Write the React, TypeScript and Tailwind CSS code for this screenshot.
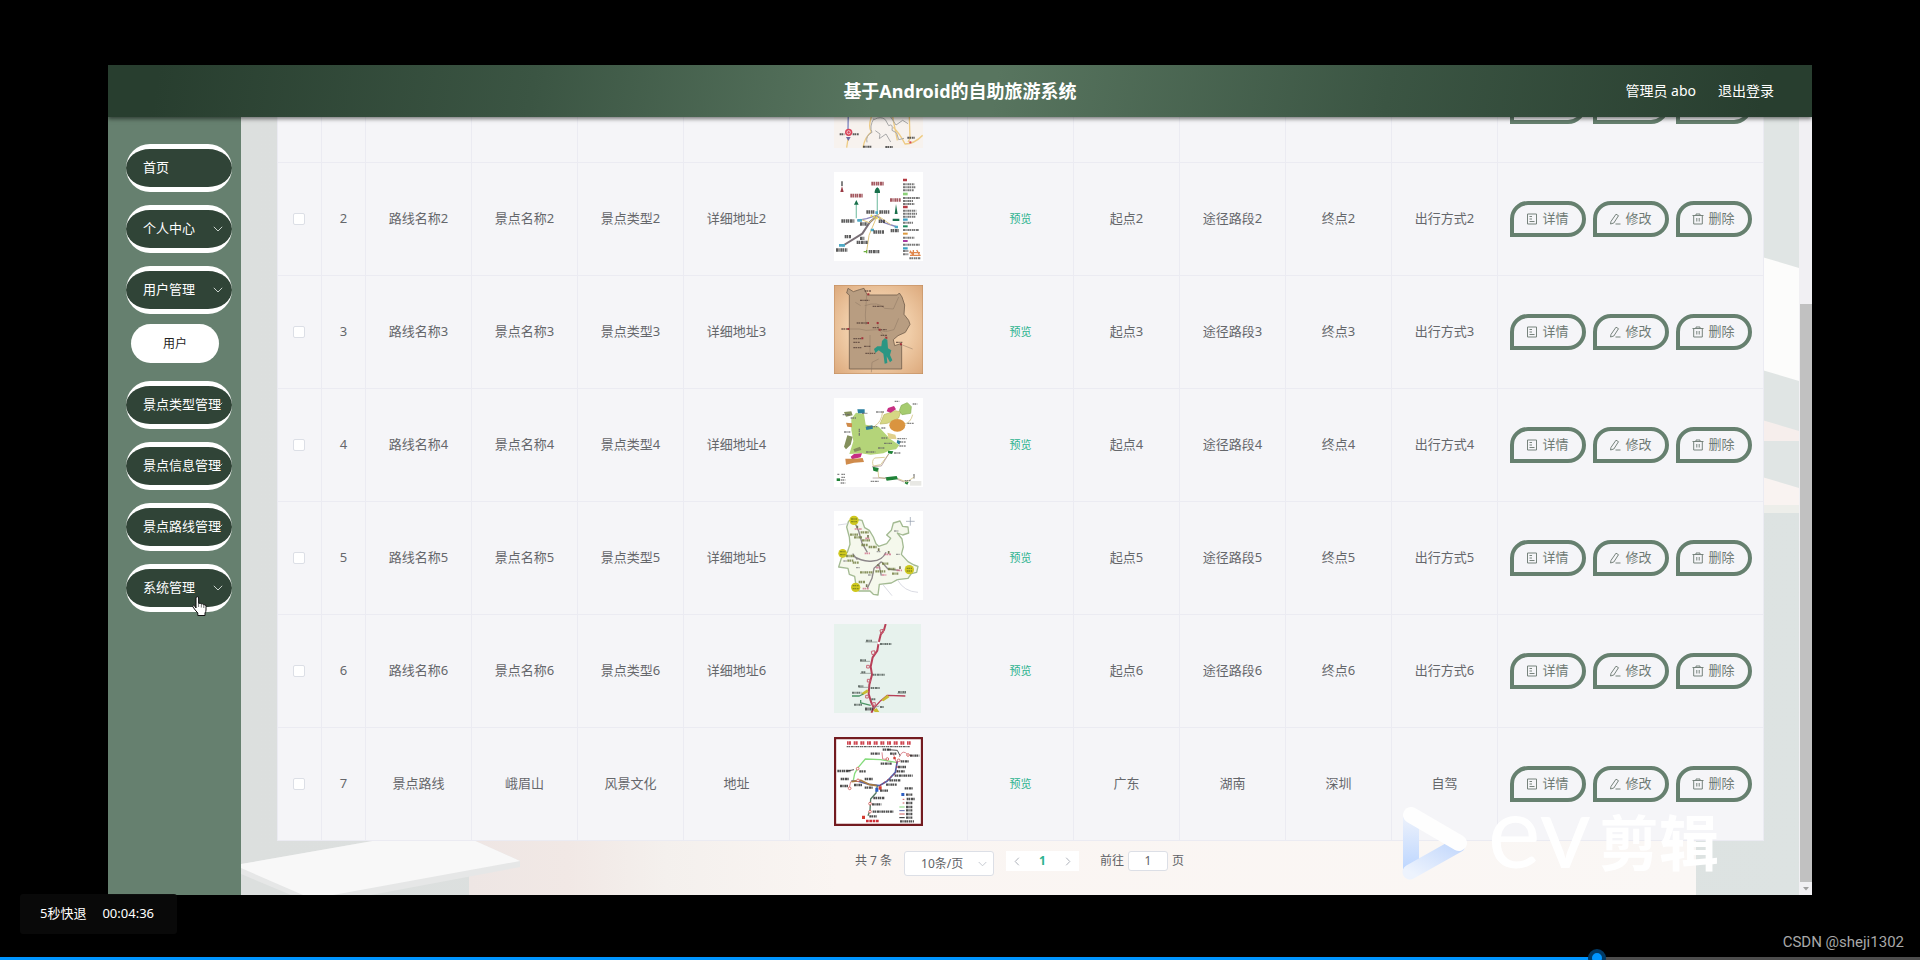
import type { ReactNode } from "react"
import clsx from "clsx"

type MenuItem = {
  label: string
  children?: string[]
  arrow?: boolean
  hovered?: boolean
}

const menus: MenuItem[] = [
  { label: "首页" },
  { label: "个人中心", arrow: true },
  { label: "用户管理", arrow: true, children: ["用户"] },
  { label: "景点类型管理", arrow: true },
  { label: "景点信息管理", arrow: true },
  { label: "景点路线管理", arrow: true },
  { label: "系统管理", arrow: true, hovered: true },
]

const routes = [
  {
    // mostly scrolled under the header
    id: 1,
    scrolled: true,
    before: ["路线名称1", "景点名称1", "景点类型1", "详细地址1"],
    after: ["起点1", "途径路段1", "终点1", "出行方式1"],
    map: <MapOne />,
  },
  {
    id: 2,
    before: ["路线名称2", "景点名称2", "景点类型2", "详细地址2"],
    after: ["起点2", "途径路段2", "终点2", "出行方式2"],
    map: <MapTwo />,
  },
  {
    id: 3,
    before: ["路线名称3", "景点名称3", "景点类型3", "详细地址3"],
    after: ["起点3", "途径路段3", "终点3", "出行方式3"],
    map: <MapThree />,
  },
  {
    id: 4,
    before: ["路线名称4", "景点名称4", "景点类型4", "详细地址4"],
    after: ["起点4", "途径路段4", "终点4", "出行方式4"],
    map: <MapFour />,
  },
  {
    id: 5,
    before: ["路线名称5", "景点名称5", "景点类型5", "详细地址5"],
    after: ["起点5", "途径路段5", "终点5", "出行方式5"],
    map: <MapFive />,
  },
  {
    id: 6,
    before: ["路线名称6", "景点名称6", "景点类型6", "详细地址6"],
    after: ["起点6", "途径路段6", "终点6", "出行方式6"],
    map: <MapSix />,
  },
  {
    id: 7,
    before: ["景点路线", "峨眉山", "风景文化", "地址"],
    after: ["广东", "湖南", "深圳", "自驾"],
    map: <MapSeven />,
  },
]

export default function App() {
  return (
    <div className="relative flex h-screen flex-col overflow-hidden bg-black px-27 py-[65px] font-['Noto_Sans','Noto_Sans_CJK_SC',sans-serif]">
      <div className="flex min-h-0 flex-1 flex-col">
        <Header />
        <div className="flex min-h-0 flex-1">
          <Sidebar />
          <main className="relative flex min-w-0 flex-1 overflow-hidden bg-[#dde1e0]">
            <Backdrop />
            <div className="relative flex min-w-0 flex-1 flex-col justify-end pr-[37px] pl-9">
              <RouteTable />
              <Pagination />
            </div>
            <Scrollbar />
            <Watermark />
          </main>
        </div>
      </div>
      <Player />
    </div>
  )
}

function Header() {
  return (
    <header className="relative z-10 grid h-[52px] shrink-0 grid-cols-[1fr_auto_1fr] items-center bg-linear-[100deg,#283e2f_3%,#3b5543_25%,#58755f_45%,#58755f_52%,#3b5543_75%,#283e2f_97%] text-white shadow-[0_2px_4px_rgba(0,0,0,0.5)]">
      <span />
      <h1 className="text-[18px] font-bold">基于Android的自助旅游系统</h1>
      <div className="flex justify-end gap-[22px] pr-[38px] text-sm">
        <span>管理员 abo</span>
        <a href="#logout">退出登录</a>
      </div>
    </header>
  )
}

function Sidebar() {
  return (
    <nav className="w-[133px] shrink-0 bg-[#66806f] pt-[27px] pl-[18px]">
      <ul className="flex flex-col gap-[13px] text-[13px]">
        {menus.map((item) => (
          <li key={item.label} className={clsx(item.children && "mb-[5px]")}>
            <button
              type="button"
              className="relative flex h-12 w-[106px] items-center rounded-[24px] border-y-[5px] border-white bg-[#304437] pl-[17px] whitespace-nowrap text-white"
            >
              {item.label}
              {item.arrow && (
                <svg
                  viewBox="0 0 10 6"
                  className="absolute top-4 right-[9px] h-[6px] w-[10px]"
                  fill="none"
                  stroke="#c9d2cc"
                >
                  <path d="M.8 .8 5 5 9.2 .8" />
                </svg>
              )}
              {item.hovered && <HandCursor />}
            </button>
            {item.children?.map((child) => (
              <a
                key={child}
                href="#user"
                className="mt-[10px] ml-[5px] flex h-[39px] w-[88px] items-center justify-center rounded-[20px] bg-white text-[12px] text-[#222]"
              >
                {child}
              </a>
            ))}
          </li>
        ))}
      </ul>
    </nav>
  )
}

function HandCursor() {
  return (
    <svg
      viewBox="0 0 15 20"
      className="absolute top-[27px] left-[66px] h-5 w-[15px]"
      fill="#fff"
      stroke="#111"
      strokeLinejoin="round"
    >
      <path d="M4 12V2q0-1.300 1.300-1.300T6.600 2v5.500q2-1 2.600.6 2-.8 2.500.6 2.300-.6 2.300 1.600v3.700q0 1.500-1 3v2.500H5.800V17Q3 14 1 11q-.8-1.500.4-1.700T4 12Z" />
      <path d="M6.600 8v3M9.300 8.500v3M11.800 9v3" strokeWidth=".6" />
    </svg>
  )
}

/* desk photo behind the table, only its edges stay visible */
function Backdrop() {
  return (
    <svg
      viewBox="0 0 1571 778"
      preserveAspectRatio="none"
      className="absolute inset-0 size-full"
    >
      <defs>
        <linearGradient id="warm">
          <stop offset="0" stopColor="#eee6e4" />
          <stop offset=".08" stopColor="#f1e8e5" />
          <stop offset=".16" stopColor="#f4f0ed" />
          <stop offset=".3" stopColor="#faf5f2" />
          <stop offset="1" stopColor="#faf7f5" />
        </linearGradient>
        <linearGradient id="wall">
          <stop offset="0" stopColor="#dcdfde" />
          <stop offset="1" stopColor="#dde3e2" />
        </linearGradient>
      </defs>
      <rect width="1571" height="778" fill="url(#wall)" />
      <rect x="1500" width="71" height="396" fill="#e0e5e4" />
      <path d="M228 722H1455V778H228Z" fill="url(#warm)" />
      <path d="M0 747 143 722H230L279 744V750L130 778H50L0 757Z" fill="#e6e7e7" />
      <path d="M0 747 143 722H230L279 744 92 778H62L0 751Z" fill="#f8f8f8" />
      <path d="M1521 140 1558 151V264L1521 253Z" fill="#fcfcfb" />
      <path d="M1521 303 1558 314V324H1521Z" fill="#f6eeec" />
      <path d="M1521 360 1558 371V388H1521Z" fill="#f9f3f1" />
      <path d="M1521 388H1558V396H1521Z" fill="#edeeea" />
    </svg>
  )
}

function RouteTable() {
  return (
    <table className="w-full table-fixed border-collapse bg-[#f5f5f8] text-center text-[13px] text-[#65676b]">
      <colgroup>
        <col className="w-[44px]" />
        <col className="w-[44px]" />
        <col className="w-[106px]" />
        <col className="w-[106px]" />
        <col className="w-[106px]" />
        <col className="w-[106px]" />
        <col className="w-[178px]" />
        <col className="w-[106px]" />
        <col className="w-[106px]" />
        <col className="w-[106px]" />
        <col className="w-[106px]" />
        <col className="w-[106px]" />
        <col className="w-[266px]" />
      </colgroup>
      <tbody>
        {routes.map((route) => (
          <tr key={route.id} className="h-[113px]">
            <Cell>
              <input
                type="checkbox"
                aria-label={`选择第${route.id}行`}
                className="ml-[15px] block size-3 appearance-none rounded-[2px] border border-[#dcdfe6] bg-white"
              />
            </Cell>
            <Cell hidden={route.scrolled}>{route.id}</Cell>
            {route.before.map((text) => (
              <Cell key={text} hidden={route.scrolled}>
                {text}
              </Cell>
            ))}
            <Cell>{route.map}</Cell>
            <Cell hidden={route.scrolled}>
              <a href="#preview" className="text-[11px] text-[#2cb38f]">
                预览
              </a>
            </Cell>
            {route.after.map((text) => (
              <Cell key={text} hidden={route.scrolled}>
                {text}
              </Cell>
            ))}
            <Cell>
              <div className="flex justify-center gap-[7px]">
                <ActionButton label="详情" hidden={route.scrolled}>
                  <path d="M1.500 1h9v10h-9ZM3.500 3.500H6M3.500 6H6M3.500 8.500h5" />
                </ActionButton>
                <ActionButton label="修改" hidden={route.scrolled}>
                  <path d="M7 1.200 9.500 2.700 4.800 10 1.500 11 2 8.400ZM6.500 11h5" />
                </ActionButton>
                <ActionButton label="删除" hidden={route.scrolled}>
                  <path d="M.5 2.500h11M4 2.500V1h4v1.500M1.700 2.500V11h8.600V2.500M4.800 5v3.500M7.200 5v3.500" />
                </ActionButton>
              </div>
            </Cell>
          </tr>
        ))}
      </tbody>
    </table>
  )
}

function Cell({ children, hidden }: { children: ReactNode; hidden?: boolean }) {
  return (
    <td className="border border-[#ebebf2] p-0">
      {hidden ? <span className="invisible">{children}</span> : children}
    </td>
  )
}

function ActionButton({
  label,
  hidden,
  children,
}: {
  label: string
  hidden?: boolean
  children: ReactNode
}) {
  return (
    <button
      type="button"
      className="flex h-9 w-[76px] items-center justify-center gap-1 rounded-[18px] rounded-bl-none border-4 border-[#66806f] text-[13px] text-[#6e7a74]"
    >
      <svg viewBox="0 0 12 12" className="size-3" fill="none" stroke="#77837c">
        {children}
      </svg>
      <span className={clsx(hidden && "invisible")}>{label}</span>
    </button>
  )
}

function Pagination() {
  return (
    <div className="flex h-[54px] shrink-0 items-start justify-center pt-[10px] text-[12px] text-[#606266]">
      <span className="mr-3 leading-5">共 7 条</span>
      <div className="relative mr-3">
        <select
          aria-label="每页条数"
          className="h-[25px] w-[90px] appearance-none rounded-[3px] border border-[#dcdfe6] bg-white pl-4 text-[12px]"
        >
          <option>10条/页</option>
        </select>
        <svg
          viewBox="0 0 10 6"
          className="pointer-events-none absolute top-[10px] right-[7px] h-[6px] w-[9px]"
          fill="none"
          stroke="#c0c4cc"
        >
          <path d="M.8 .8 5 5 9.2 .8" />
        </svg>
      </div>
      <div className="mr-[21px] flex h-5 w-[73px] items-center justify-between bg-white px-2">
        <button type="button" aria-label="上一页">
          <svg viewBox="0 0 6 10" className="h-[9px] w-[6px]" fill="none" stroke="#a5a9b2">
            <path d="M5 .8 1 5l4 4.200" />
          </svg>
        </button>
        <button type="button" className="font-bold text-[#2cb38f]">
          1
        </button>
        <button type="button" aria-label="下一页">
          <svg viewBox="0 0 6 10" className="h-[9px] w-[6px]" fill="none" stroke="#a5a9b2">
            <path d="m1 .8 4 4.200-4 4.200" />
          </svg>
        </button>
      </div>
      <label className="flex items-center gap-1 leading-5">
        前往
        <input
          defaultValue="1"
          className="h-5 w-10 rounded-[3px] border border-[#dcdfe6] bg-white text-center text-[12px]"
        />
        页
      </label>
    </div>
  )
}

function Scrollbar() {
  return (
    <div className="relative flex w-[13px] shrink-0 flex-col bg-[#f1f0f3] pl-px">
      <div className="h-[24%]" />
      <div className="flex-1 bg-[#c1c1c1]" />
      <div className="flex h-[13px] items-center justify-center">
        <svg viewBox="0 0 6 4" className="h-1 w-[6px]" fill="#a0a0a0">
          <path d="M0 0h6L3 3.500Z" />
        </svg>
      </div>
    </div>
  )
}

function Watermark() {
  return (
    <div className="pointer-events-none absolute right-[93px] bottom-[15px] flex h-[74px] items-center text-white">
      <svg viewBox="0 0 66 74" className="mr-5 h-[74px] w-[66px]">
        <defs>
          <linearGradient id="evLeft" x2="0" y2="1">
            <stop offset="0" stopColor="#eef2fb" />
            <stop offset="1" stopColor="#bcd6ff" />
          </linearGradient>
          <linearGradient id="evBottom" x1="1" y1="0" x2="0" y2="1">
            <stop offset="0" stopColor="#c3d8fc" />
            <stop offset="1" stopColor="#edf3fd" />
          </linearGradient>
        </defs>
        <path d="M1 9H17V64H1Z" fill="url(#evLeft)" />
        <path d="M8 66 56 39" stroke="url(#evBottom)" strokeWidth="15" strokeLinecap="round" />
        <path d="M9 9 57 37" stroke="#fefefe" strokeWidth="16" strokeLinecap="round" />
      </svg>
      <span className="flex h-[74px] items-center font-['Lato',sans-serif] text-[100px] leading-[74px]">
        <span className="-mt-7">ev</span>
      </span>
      <span className="ml-2 text-[60px] leading-[74px] font-bold">剪辑</span>
    </div>
  )
}

function Player() {
  return (
    <>
      <div className="absolute bottom-[26px] left-5 flex h-10 w-[157px] items-center gap-4 rounded-[3px] bg-[#0a0a0a]/95 pl-5 text-[13px] text-white">
        <span>5秒快退</span>
        <span>00:04:36</span>
      </div>
      <span className="absolute right-4 bottom-2 font-['Roboto','Liberation_Sans',sans-serif] text-[15px] leading-5 text-[#a8a8a8]">
        CSDN @sheji1302
      </span>
      <div className="absolute inset-x-0 bottom-0 h-[3px] bg-[#4d4d4d]">
        <div className="relative h-full w-[83.2%] bg-[#0095ff]">
          <span className="absolute -top-2 -right-[9px] size-[18px] rounded-full border-4 border-[#003a66] bg-[#0095ff]" />
        </div>
      </div>
    </>
  )
}

function Thumb({ children }: { children: ReactNode }) {
  return (
    <svg
      viewBox="0 0 267 267"
      className="mx-auto mb-[6px] size-[89px]"
      fill="none"
      strokeLinejoin="round"
    >
      {children}
    </svg>
  )
}

/* rows of place names, too small to read */
function Marks({ d, color = "#333", size = 6 }: { d: string; color?: string; size?: number }) {
  return <path d={d} stroke={color} strokeWidth={size} strokeDasharray="6 1 4 2" opacity=".8" />
}

function MapOne() {
  return (
    <Thumb>
      <path d="M0 0H267V267H0Z" fill="#f7f2ee" />
      <path d="M44 100 42 212" stroke="#7f86c0" strokeWidth="4" />
      <path d="M42 240 38 266M112 174q-10 30 0 45-20 15-25 47M176 174l8 40 6 30M226 174l2 65-6 10M178 205q20 20 35 50 28 0 53-26" stroke="#eecb83" strokeWidth="4" />
      <path d="M120 178q-15 25-6 42-20 10-15 30M120 182q20-12 34 0l10 18q14-8 10 14l14 8 6 20 16-4M124 215l14 10-2 14 20-14 14 24M170 174l16 24 20-14 16 10" stroke="#a9a9a9" strokeWidth="3" />
      <circle cx="44" cy="220" r="11" fill="#d94459" />
      <circle cx="44" cy="220" r="5" stroke="#fff" strokeWidth="2" />
      <path d="m36 234 7 12 7-12Z" fill="#6c6aa0" />
      <Marks d="M17 226h14M56 226h18M87 263h27M154 264h22M220 236h22" />
      <path d="M226 250h6" stroke="#d94459" strokeWidth="6" />
    </Thumb>
  )
}

function MapTwo() {
  return (
    <Thumb>
      <path d="M0 0H267V267H0Z" fill="#fff" />
      <path d="M24 28v14" stroke="#444" strokeWidth="4" />
      <path d="m24 42 5 18H19Z" fill="#993a44" />
      <path d="M130 60v70M67 97v42" stroke="#8fcab4" strokeWidth="4" />
      <path d="M130 46q9 6 8 17h-16q-1-11 8-17ZM67 84l7 14H60ZM186 96l5 30h-9ZM176 140h20v7h-20Z" fill="#19704b" />
      <path d="M25 222 85 185 108 150 128 133" stroke="#7a7077" strokeWidth="6" />
      <path d="M70 145 98 140 128 130 150 152 190 165" stroke="#8c89bd" strokeWidth="4" />
      <path d="M80 142 106 152 140 122M128 135 105 190 98 238M130 130 170 158" stroke="#e3c87d" strokeWidth="3" />
      <path d="M70 145h14M110 174h10M15 220h18M182 165h10M124 122h8" stroke="#4eaac6" strokeWidth="8" />
      <path d="M110 130 142 144" stroke="#e8d64f" strokeWidth="6" strokeDasharray="5 4" />
      <Marks d="M112 35h38M49 71h38M168 84h32" color="#8d3038" size={11} />
      <Marks d="M97 120h26M136 120h30M22 147h40M78 156h22M32 194h20M68 211h34M118 180h32M134 148h20M170 176h26M6 234h34M104 239h32M78 199h14" size={10} />
      <path d="M89 239h10M98 234v10" stroke="#6fae42" strokeWidth="4" />
      <Marks d="M207 37h34M207 46h38M207 55h32M207 78h50M207 87h30M207 96h34M207 116h40M207 125h42M207 134h38M207 152h30M207 174h48M207 197h34M207 218h50M207 237h16M207 247h16M226 259h34" color="#555" />
      <path d="M207 24h12M207 105h14" stroke="#b33b43" strokeWidth="7" />
      <path d="M207 66h14" stroke="#8bd078" strokeWidth="8" />
      <path d="M207 143h14M207 229h14" stroke="#3c9fc4" strokeWidth="7" />
      <path d="M207 163h14" stroke="#1c8a5b" strokeWidth="6" />
      <path d="M207 185h14" stroke="#dc9a3f" strokeWidth="6" />
      <path d="M207 207h14" stroke="#a839a0" strokeWidth="6" />
      <path d="m228 236 8 12M238 234v14M248 234l8 14M226 242h32M228 250h32" stroke="#e0884e" strokeWidth="4" />
    </Thumb>
  )
}

function MapThree() {
  return (
    <Thumb>
      <defs>
        <radialGradient id="parchment" r=".7">
          <stop offset=".5" stopColor="#f0cda8" />
          <stop offset="1" stopColor="#dca97c" />
        </radialGradient>
      </defs>
      <path d="M0 0H267V267H0Z" fill="url(#parchment)" stroke="#bd8a5e" strokeWidth="3" />
      <path
        d="M46 252V30L38 24 42 10 58 20 76 14 90 10 100 30H190L196 24 204 36 212 60 210 88 224 106 228 118 214 142 192 152 178 164 182 182 200 176 203 184V252Z"
        fill="#b89d81"
        stroke="#75604d"
        strokeWidth="2.500"
      />
      <path d="M46 132h30l20 4 34-2 24 6 26-6 14-34M98 30l-4 60 2 30M92 62q40-14 60 8l26 2 16-36M130 110l4 24 24 26M108 150v60M134 222l-20 10-2 30M80 62 64 52M200 178l36 14" stroke="#8c7763" strokeWidth="1.500" />
      <path d="M152 160 160 164 162 190 172 196 168 210 175 226 168 232 158 214 160 234 152 236 148 206 134 196 124 204 120 192 130 184 142 184 144 168Z" fill="#2b9683" />
      <Marks d="M78 46h28M116 64h34M68 114h34M116 128h18M58 161h26M58 172h20M58 188h24M90 184h20M94 205h30M134 134h26M22 132h22M140 151h20M92 18h20M186 172h20" color="#59443b" size={4} />
      <path d="M100 28h6M40 132h6M128 114h6M134 134h6M154 158h6M82 160h6M198 178h6M100 114h5" stroke="#a2333a" strokeWidth="6" />
    </Thumb>
  )
}

function MapFour() {
  return (
    <Thumb>
      <path d="M0 0H267V267H0Z" fill="#fff" />
      <path d="M52 62 66 44 90 48 95 80 134 86 158 112 168 122 196 142 186 154 170 156 148 166 110 170 80 166 46 168 58 130 52 96Z" fill="#b4d479" />
      <path d="M138 78 150 50 184 38 200 42 194 60 160 76Z" fill="#d6d784" stroke="#b9b55f" strokeWidth="2" />
      <path d="M196 38 202 22 220 14 232 26 230 46 204 50Z" fill="#a6cc6f" stroke="#87ad55" strokeWidth="2" />
      <ellipse cx="190" cy="82" rx="24" ry="19" fill="#da943f" />
      <path d="M158 40 162 30 180 24 186 34 170 44ZM50 176 60 168 84 166 80 178 54 184Z" fill="#c72e83" />
      <path d="M70 34h22v12H72ZM95 86l20-4 2 10-20 4ZM190 126l10 4-4 10-8-6Z" fill="#2a7f9e" />
      <path d="M30 42 52 40 56 52 36 56ZM30 146 40 112 56 116 50 140 36 154ZM58 154l20-8 4 10-20 6Z" fill="#84905c" />
      <path d="M36 74 54 76 54 88 40 86ZM34 182 60 182 86 180 90 192 60 194 36 200Z" fill="#cf8b4b" />
      <path d="M160 104 184 110 188 124 164 122Z" fill="#e1d08c" />
      <path d="M116 206l18 4-2 12-14-4ZM154 238l34-4 4 10-34 4ZM162 158l16 2-4 8-12-2ZM214 250l10 2-4 8-8-4Z" fill="#1f8237" />
      <path d="M122 84q20-10 24-44M236 50q-6 24-24 28M164 168 140 200 118 204q-6-16 4-24l30-2M132 218l2 20 20 4M192 242l26 10 24-16" stroke="#dccf9b" strokeWidth="3" />
      <path d="M114 206 142 204 164 168M116 240h42M190 244l20 8" stroke="#a18582" strokeWidth="2" />
      <Marks d="M182 10h14M236 18h14M126 42h26M100 86h30M142 90h14M30 102h20M142 120h18M190 122h28M196 132h20M196 144h20M150 136h26M132 150h20M96 162h28M180 165h20M110 250h24M220 76h20M50 60h16M26 50h22M76 92v22M84 46h16M10 229h6M22 229h12M22 238h12M20 246h14M20 255h14M212 248h18M240 228v14" color="#666" size={4} />
      <path d="M8 241h10v8H8Z" fill="#1f8237" />
      <path d="M228 256h34" stroke="#e8e8e4" strokeWidth="14" />
    </Thumb>
  )
}

function MapFive() {
  return (
    <Thumb>
      <path d="M0 0H267V267H0Z" fill="#fff" />
      <path
        d="M38 48 44 30 60 24 84 28 92 50 106 58 118 78 126 98 134 106 158 98 170 82 158 72 172 58 178 36 198 30 206 46 222 48 224 66 206 72 190 66 204 84 208 108 202 130 222 152 240 162 252 166 248 184 232 188 222 202 190 206 172 216 136 220 132 252 118 250 108 240 74 240 66 224 62 196 46 190 42 172 14 168 22 142 40 124 48 100 46 78Z"
        fill="#f5f8ec"
        stroke="#a3ba92"
        strokeWidth="4"
      />
      <path d="M60 30 74 60 84 96 100 124M56 134q30 20 60 16 28 0 40-26M56 128l14 18M142 152l-22 20-6 30-14 30M142 152l20 22 34 4M134 158l8 36" stroke="#8d8789" strokeWidth="4" />
      <path d="M12 42l30-4M146 220l28 34M190 206q20 36 62 38" stroke="#c7c9d4" strokeWidth="2" />
      <path d="M229 18v26M216 31h26" stroke="#8d97a8" strokeWidth="2" />
      <g fill="#cfc81f">
        <circle cx="60" cy="28" r="14" />
        <circle cx="26" cy="127" r="13" />
        <circle cx="65" cy="229" r="14" />
        <circle cx="226" cy="176" r="14" />
      </g>
      <Marks d="M51 24h18M51 32h18M18 122h16M18 131h16M56 224h18M56 233h18M218 172h16M218 180h16" color="#77801a" size={4} />
      <Marks d="M48 71h24M60 79h24M80 64h24M84 88h24M82 102h20M104 108h24M36 135h24M40 149h18M56 155h18M78 184h40M144 158h20M124 181h30M162 174h22M174 188h20M74 213h20" color="#6f7a3c" size={7} />
      <Marks d="M62 54h22M94 82h14M92 127h16M152 130h20M188 178h16M86 233h18M126 170h14M144 192h14" color="#cf6f8c" size={5} />
      <path d="M70 44v8M102 72v8M134 112v8M164 120v8M198 166v8M98 220v8M132 160v6" stroke="#775" strokeWidth="5" />
      <Marks d="M180 60h14M28 150h10M66 170h12M186 130h12M102 192h10M128 122h12" color="#888" size={4} />
    </Thumb>
  )
}

function MapSix() {
  return (
    <Thumb>
      <path d="M0 0H261V267H0Z" fill="#e7f2ed" />
      <path d="M155 0 150 18 140 32 134 56 130 80 116 100 110 128 114 152 106 182 104 210 112 236 120 252 112 266" stroke="#b84058" strokeWidth="6" />
      <path d="M120 252 140 230 160 214 214 216" stroke="#b84058" strokeWidth="4" />
      <path d="M82 208 100 196 104 204 86 214ZM142 228 160 212 166 220 148 232ZM118 258 128 252 136 264H122Z" fill="#c9bb31" />
      <path d="M54 216h22l12-6M78 236l32 8M80 228v8" stroke="#4b9465" strokeWidth="4" />
      <path d="M94 54h36M78 112h30M78 148h34M74 190h30M116 252l20-6M190 208h26" stroke="#7b8580" strokeWidth="2" />
      <path d="M138 18l10-2v10l-8 2ZM112 82l10-2v10l-8 2ZM98 124h8v8h-8ZM100 166h8v8h-8ZM95 214h8v8h-8ZM116 236h8v8h-8Z" stroke="#c96576" strokeWidth="3" />
      <circle cx="134" cy="57" r="4" fill="#fff" />
      <Marks d="M96 50h18M138 60h34M78 109h18M82 145h14M116 152h36M72 187h16M110 192h28M54 206h28M192 204h24M60 242h26M112 226h14M138 249h12" color="#4b5550" size={6} />
      <Marks d="M93 255h26" size={9} />
    </Thumb>
  )
}

function MapSeven() {
  return (
    <Thumb>
      <path d="M3 3H264V264H3Z" fill="#fff" stroke="#731b20" strokeWidth="7" />
      <path d="M39 18H230" stroke="#cf4650" strokeWidth="10" strokeDasharray="5 1 6 8" />
      <Marks d="M38 29H228" size={4} />
      <path d="M58 130 62 110 72 92 94 66 140 68 186 76" stroke="#86dc7d" strokeWidth="4" />
      <path d="M190 72 184 106 160 132 136 146 106 142 70 132H52" stroke="#5360a8" strokeWidth="5" />
      <path d="M52 134 80 130 104 142 128 146" stroke="#a97a3f" strokeWidth="5" />
      <path d="M188 74 190 104 164 126 138 146" stroke="#bb3a49" strokeWidth="3" strokeDasharray="6 7" />
      <path d="M130 146 126 168 110 186 108 220 102 236" stroke="#557a63" strokeWidth="4" />
      <path d="M196 60q10-26 26-6l14 2M186 74 178 50M50 134l-4 18M144 46l2 20 18 2" stroke="#dd8b93" strokeWidth="3" />
      <path d="M160 38 190 40 198 56M40 102 60 98" stroke="#555" strokeWidth="3" />
      <path d="M124 152h9v12h-9ZM202 168h9v9h-9Z" fill="#2d5fc3" />
      <path d="M134 148h9v10h-9ZM84 236h9v10h-9ZM178 60h7v7h-7Z" fill="#d63c31" />
      <g fill="#fff" stroke="#cf5a58" strokeWidth="2.500">
        <circle cx="71" cy="95" r="4" />
        <circle cx="160" cy="66" r="4" />
        <circle cx="194" cy="70" r="4" />
        <circle cx="108" cy="200" r="4" />
        <circle cx="108" cy="224" r="4" />
        <circle cx="72" cy="130" r="4" />
        <circle cx="222" cy="54" r="4" />
        <circle cx="47" cy="154" r="4" />
      </g>
      <Marks d="M110 50h28M146 38h24M168 50h20M228 56h28M140 80h34M200 73h24M10 102h40M76 103h20M192 90h26M188 103h26M182 116h54M166 130h34M156 143h32M20 126h26M92 126h24M60 144h26M92 152h26M138 161h26M118 183h34M114 202h28M116 224h62M106 238h22M18 147h26M212 154h24M216 173h20M218 186h26M216 198h20M216 210h20M216 220h20M216 231h20M216 242h20M198 253h42" color="#222" size={7} />
      <path d="M96 252h40" stroke="#cf2e36" strokeWidth="8" strokeDasharray="8 2" />
      <path d="M196 210h16" stroke="#86dc7d" strokeWidth="3" />
      <path d="M196 221h16" stroke="#5360a8" strokeWidth="3" />
      <path d="M196 231h16M206 187h5M206 198h5" stroke="#cf5a58" strokeWidth="3" />
      <path d="M196 242h16" stroke="#222" strokeWidth="3" />
    </Thumb>
  )
}
